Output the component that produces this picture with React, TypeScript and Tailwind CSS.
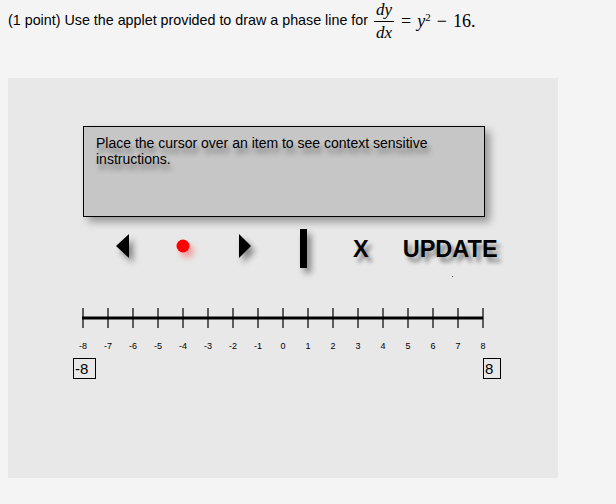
import React from "react";

const ticks = Array.from({ length: 17 }, (_, i) => i - 8);

export default function App() {
  return (
    <div className="w-[616px] h-[504px] bg-[#f4f4f4] font-['Liberation_Sans',Arial,sans-serif] text-black overflow-hidden">
      <div className="h-[78px] pl-[8px] pt-[4px]">
        <div className="flex items-center h-[34px] text-[14.3px]">
          <span>(1 point) Use the applet provided to draw a phase line for</span>
          <span className="inline-flex flex-col items-center ml-[6px] mr-[7px] font-['Liberation_Serif',serif] italic text-[17px] leading-none">
            <span className="px-[2px] pb-[3px]">dy</span>
            <span className="border-t border-black w-full"></span>
            <span className="pt-[2px]">dx</span>
          </span>
          <span className="flex items-baseline font-['Liberation_Serif',serif] text-[18px]">
            <span className="mr-[6px]">=</span>
            <i>y</i>
            <sup className="text-[11px]">2</sup>
            <span className="ml-[6px] mr-[6px]">−</span>
            <span>16.</span>
          </span>
        </div>
      </div>

      <div className="relative ml-[8px] w-[550px] h-[400px] bg-[#e8e8e8] pt-[48px]">
        <div className="ml-[75px] w-[402px] h-[91px] border border-black bg-[#c6c6c6] shadow-[5px_5px_8px_rgba(0,0,0,0.35)] pl-[12px] pt-[8px] text-[14px] leading-[16px] [text-shadow:3px_6px_5px_rgba(0,0,0,0.4)]">
          Place the cursor over an item to see context sensitive
          <br />
          instructions.
        </div>

        <div className="flex items-start h-[39px] mt-[12px]">
          <svg width="13" height="24" viewBox="0 0 13 24" className="ml-[108px] mt-[5px] drop-shadow-[4px_5px_3px_rgba(0,0,0,0.45)]">
            <polygon points="0,12 13,0 13,24" fill="#000" />
          </svg>
          <svg width="14" height="14" viewBox="0 0 14 14" className="ml-[47px] mt-[10px] drop-shadow-[4px_5px_3px_rgba(255,0,0,0.35)]">
            <circle cx="7" cy="7" r="6.5" fill="#ff0000" />
          </svg>
          <svg width="12" height="24" viewBox="0 0 12 24" className="ml-[49px] mt-[5px] drop-shadow-[4px_5px_3px_rgba(0,0,0,0.45)]">
            <polygon points="0,0 12,12 0,24" fill="#000" />
          </svg>
          <svg width="7" height="39" viewBox="0 0 7 39" className="ml-[49px] drop-shadow-[4px_5px_3px_rgba(0,0,0,0.45)]">
            <rect x="0" y="0" width="7" height="39" fill="#000" />
          </svg>
          <span className="ml-[46px] mt-[9px] text-[23.5px] leading-none font-bold [text-shadow:4px_5px_4px_rgba(0,0,0,0.45)]">
            X
          </span>
          <span className="ml-[34px] mt-[9px] text-[23.5px] leading-none font-bold [text-shadow:4px_5px_4px_rgba(0,0,0,0.45)]">
            UPDATE
          </span>
        </div>

        <div className="absolute left-[444px] top-[198px] w-[1px] h-[1px] bg-[#444]"></div>

        <svg width="420" height="50" viewBox="0 0 420 50" className="ml-[70px] mt-[37px] block">
          <line x1="4" y1="13" x2="405" y2="13" stroke="#000" strokeWidth="3" />
          {ticks.map((t, i) => (
            <line key={"l" + t} x1={5 + 25 * i} y1="3" x2={5 + 25 * i} y2="23" stroke="#000" strokeWidth="1.2" />
          ))}
          {ticks.map((t, i) => (
            <text
              key={"t" + t}
              x={5 + 25 * i}
              y="44"
              fontSize="9"
              textAnchor="middle"
              fontFamily="Liberation Sans, Arial, sans-serif"
              fill="#000"
            >
              {t}
            </text>
          ))}
        </svg>

        <div className="flex mt-[3px]">
          <div className="ml-[65px] w-[23px] h-[21px] border border-black pl-[1px] text-[15px] leading-[19px]">-8</div>
          <div className="ml-[387px] w-[18px] h-[21px] border border-black pl-[1px] text-[15px] leading-[19px]">8</div>
        </div>
      </div>
    </div>
  );
}
